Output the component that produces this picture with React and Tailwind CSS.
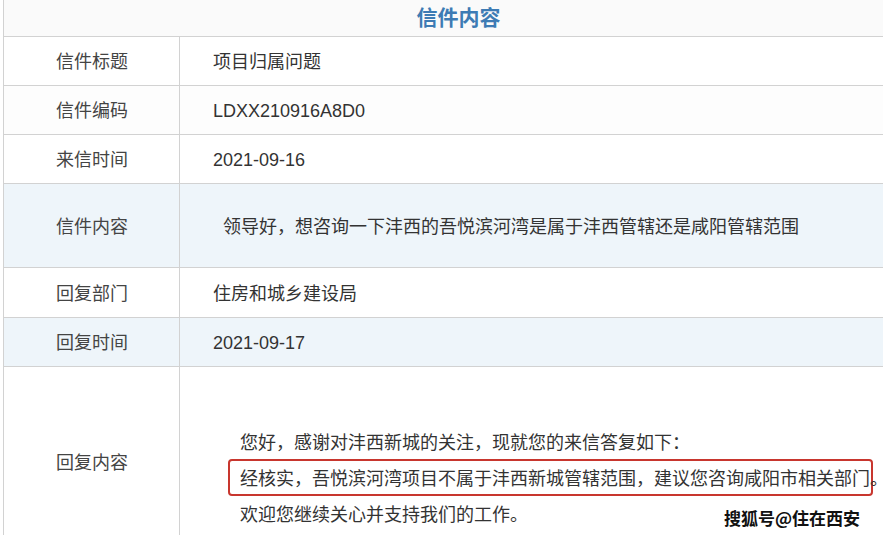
import React from 'react';

const rows = [
    { label: '信件标题', value: '项目归属问题', h: 'h-[49px]', bg: 'bg-white' },
    { label: '信件编码', value: 'LDXX210916A8D0', h: 'h-[49px]', bg: 'bg-[#fdfdfd]' },
    { label: '来信时间', value: '2021-09-16', h: 'h-[49px]', bg: 'bg-white' },
    { label: '信件内容', value: '\u00a0\u00a0领导好，想咨询一下沣西的吾悦滨河湾是属于沣西管辖还是咸阳管辖范围', h: 'h-[84px]', bg: 'bg-[#eef5fa]' },
    { label: '回复部门', value: '住房和城乡建设局', h: 'h-[50px]', bg: 'bg-white' },
    { label: '回复时间', value: '2021-09-17', h: 'h-[49px]', bg: 'bg-[#eef5fa]' },
];

const App = () => {
    return (
        <div
            className="relative h-[535px] w-[883px] overflow-hidden bg-white text-[18px] text-[#333]"
            style={{ fontFamily: '"Liberation Sans", "Noto Sans CJK SC", sans-serif' }}
        >
            <div className="ml-[3px] border-l border-[#d2d2d2]">
                <div className="flex h-[37px] items-center justify-center border-b border-[#d2d2d2] bg-[#fafafa] pl-[30px]">
                    <span className="text-[21px] font-bold text-[#3d7bb4]">信件内容</span>
                </div>

                {rows.map((row) => (
                    <div key={row.label} className={`grid grid-cols-[176px_1fr] border-b border-[#d2d2d2] ${row.h} ${row.bg}`}>
                        <div className="flex items-center border-r border-[#d2d2d2] pl-[52px] pt-[3px] text-[#444]">{row.label}</div>
                        <div className="flex items-center pl-[33px] pt-[3px]">{row.value}</div>
                    </div>
                ))}

                <div className="grid h-[190px] grid-cols-[176px_1fr] bg-white">
                    <div className="flex items-center border-r border-[#d2d2d2] pl-[52px] pt-[2px] text-[#444]">回复内容</div>
                    <div className="flex flex-col pl-[60px] pt-[58px] leading-[36px] whitespace-nowrap">
                        <div>您好，感谢对沣西新城的关注，现就您的来信答复如下：</div>
                        <div className="relative">
                            <span className="relative z-10">经核实，吾悦滨河湾项目不属于沣西新城管辖范围，建议您咨询咸阳市相关部门。</span>
                            <div className="absolute left-[-12px] top-[-2px] h-[37px] w-[645px] rounded-[4px] border-[2.5px] border-[#c8362e]" />
                        </div>
                        <div>欢迎您继续关心并支持我们的工作。</div>
                    </div>
                </div>
            </div>

            <div
                className="absolute left-[724px] top-[505px] text-[17px] font-bold text-[#111]"
                style={{ fontFamily: '"Noto Sans CJK SC", sans-serif', textShadow: '0 0 2px #fff, 0 0 2px #fff' }}
            >
                搜狐号@住在西安
            </div>
        </div>
    );
};

export default App;
